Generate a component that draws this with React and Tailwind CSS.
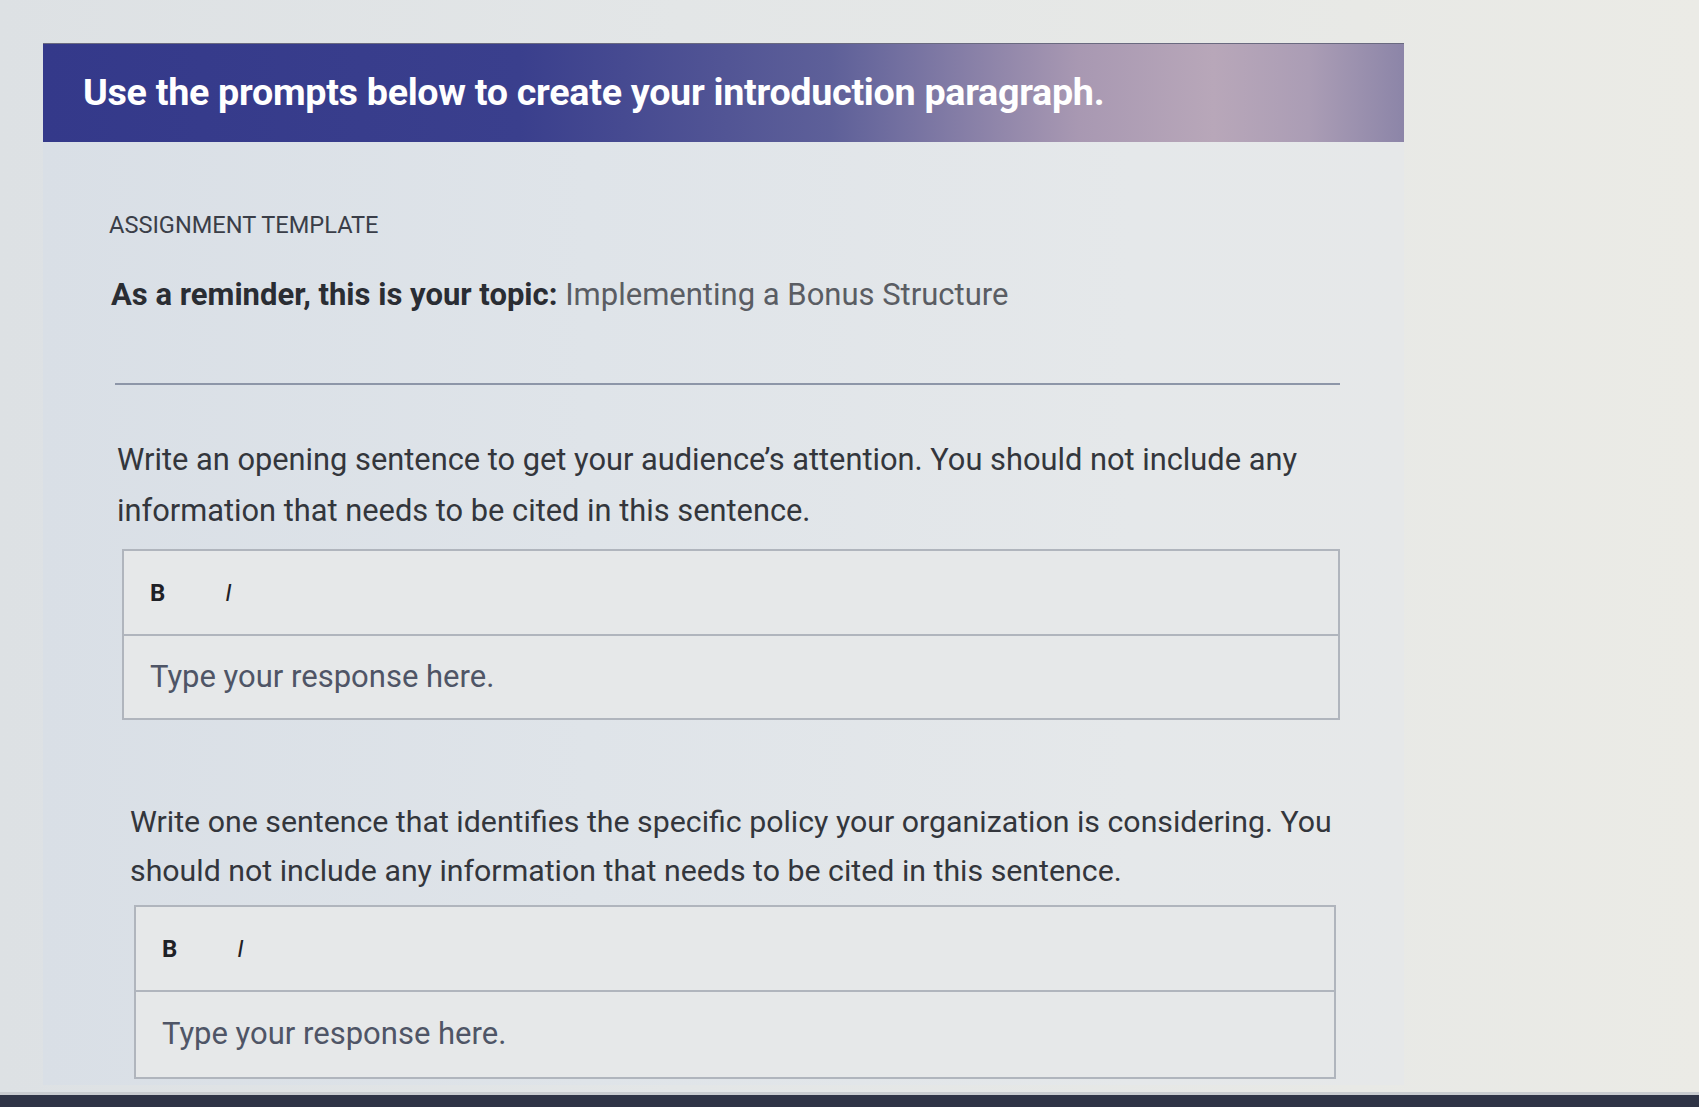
export default function App() {
  const f = { fontFamily: 'Roboto, "Liberation Sans", sans-serif' };
  return (
    <div className="w-[1699px] h-[1107px] overflow-hidden flex flex-col bg-[linear-gradient(90deg,#dde1e4_0%,#e3e6e7_40%,#e8e9e6_80%,#ebebe6_100%)]" style={f}>
      <div className="h-[43px] shrink-0" />
      <div className="ml-[43px] w-[1361px] flex flex-col shrink-0">
        <div className="h-[99px] shrink-0 flex items-center pl-[40px] bg-[linear-gradient(90deg,#34398a_0%,#3a3f8d_35%,#5e6099_58%,#a898b2_76%,#b8a7b9_86%,#ab9db5_93%,#8c85a8_100%)] border-t border-[#6a6a80]">
          <h1 className="text-[37.7px] font-bold text-white tracking-[-0.3px] leading-none">Use the prompts below to create your introduction paragraph.</h1>
        </div>
        <div className="h-[943px] flex flex-col bg-[linear-gradient(90deg,#d9dfe6_0%,#dfe4e9_40%,#e5e8ea_80%,#e6e8e9_100%)]">
          <div className="h-[71px] shrink-0" />
          <div className="ml-[66px] text-[23.6px] text-[#3a3e48] leading-[24px]">ASSIGNMENT TEMPLATE</div>
          <div className="h-[41px] shrink-0" />
          <div className="ml-[68px] text-[31px] leading-[34px] text-[#2a2d33]">
            <span className="font-bold">As a reminder, this is your topic:</span>{' '}
            <span className="text-[#5a5d63]">Implementing a Bonus Structure</span>
          </div>
          <div className="h-[71px] shrink-0" />
          <div className="ml-[72px] w-[1225px] h-[2px] bg-[#8d96a8]" />
          <div className="h-[49px] shrink-0" />
          <p className="ml-[74px] w-[1200px] text-[30.8px] leading-[51px] text-[#33363c]">
            Write an opening sentence to get your audience’s attention. You should not include any information that needs to be cited in this sentence.
          </p>
          <div className="h-[13px] shrink-0" />
          <Editor ml="ml-[79px]" w="w-[1218px]" h="h-[82px]" />
          <div className="h-[77px] shrink-0" />
          <p className="ml-[87px] w-[1260px] text-[30.3px] leading-[49px] text-[#33363c]">
            Write one sentence that identifies the specific policy your organization is considering. You should not include any information that needs to be cited in this sentence.
          </p>
          <div className="h-[10px] shrink-0" />
          <Editor ml="ml-[91px]" w="w-[1202px]" h="h-[85px]" />
        </div>
      </div>
      <div className="h-[7px] shrink-0" />
      <div className="h-[3px] shrink-0 bg-[#c9ccd0]" />
      <div className="flex-1 bg-[#2f3446]" />
    </div>
  );
}

function Editor({ ml, w, h }) {
  return (
    <div className={`${ml} ${w} border-2 border-[#b0b5bd] bg-[#e6e8e9] flex flex-col shrink-0`}>
      <div className="h-[85px] flex items-center pl-[26px] gap-[60px] border-b-2 border-[#b0b5bd]">
        <span className="font-bold text-[24px] text-[#1f2126]">B</span>
        <span className="italic text-[24px] text-[#1f2126]">I</span>
      </div>
      <div className={`${h} flex items-center pl-[26px]`}>
        <span className="text-[31px] text-[#4f5566]">Type your response here.</span>
      </div>
    </div>
  );
}
